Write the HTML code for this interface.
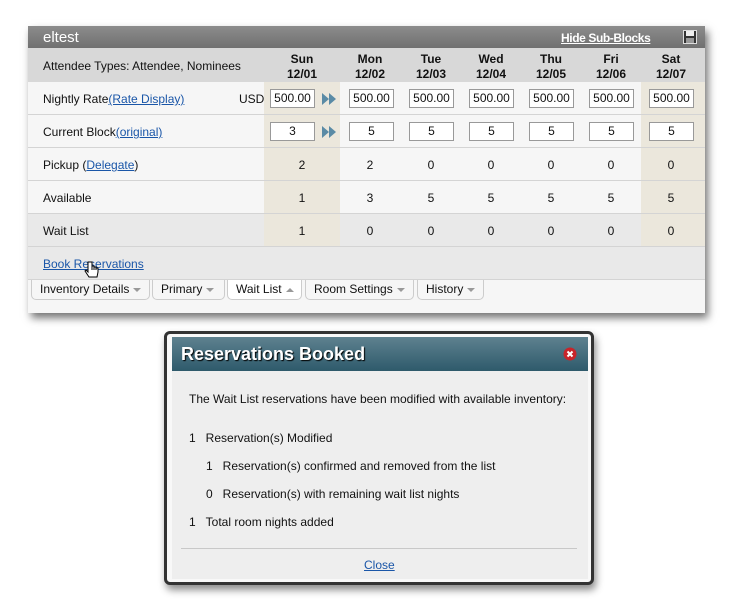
<!DOCTYPE html>
<html><head><style>
*{margin:0;padding:0;box-sizing:border-box}
body{width:730px;height:605px;background:#fff;font-family:"Liberation Sans",Arial,sans-serif;font-size:12px;color:#111;position:relative;overflow:hidden}
.a{position:absolute}
a,.lk{color:#1a56a8;text-decoration:underline}
.panel{left:28px;top:26px;width:677px;height:287px;background:#f6f6f6;box-shadow:3px 5px 8px rgba(0,0,0,.55)}
.hd{left:0;top:0;width:677px;height:22px;background:linear-gradient(#8c8c8c,#707070);color:#fff}
.row{left:0;width:677px;height:33px;border-bottom:1px solid #d4d4d4}
.c{position:absolute;text-align:center;width:60px}
.inp{position:absolute;width:45px;height:19px;border:1px solid #999;background:#fff;text-align:center;line-height:17px;font-size:12px}
.tab{position:absolute;top:254px;height:20px;border:1px solid #ccc;border-top:none;border-radius:0 0 5px 5px;background:#f6f6f6;line-height:19px;padding-left:8px;font-size:12px}
.tab i{display:inline-block;width:0;height:0;border-left:4px solid transparent;border-right:4px solid transparent;border-top:4px solid #999;vertical-align:middle;margin-left:4px}
.arr{position:absolute;width:16px;height:12px}
</style></head><body>
<div class="a panel">
 <div class="a hd"><span class="a" style="left:15px;top:3px;font-size:15px">eltest</span>
  <span class="a" style="left:533px;top:5px;font-size:12px;font-weight:bold;letter-spacing:-0.4px;text-decoration:underline">Hide Sub-Blocks</span>
  <svg class="a" style="left:655px;top:4px" width="14" height="14"><rect x="0.5" y="0.5" width="13" height="13" fill="#333" stroke="#ddd"/><rect x="3" y="1" width="8" height="5" fill="#eee"/><rect x="3" y="8" width="8" height="5" fill="#999"/></svg>
 </div>
 <div class="a" style="left:0;top:22px;width:677px;height:34px;background:#d8d8d8"></div>
 <div class="a row" style="top:56px"></div>
 <div class="a row" style="top:89px"></div>
 <div class="a row" style="top:122px"></div>
 <div class="a row" style="top:155px"></div>
 <div class="a row" style="top:188px;background:#e9e9e9"></div>
 <div class="a row" style="top:221px;background:#e9e9e9"></div>
 <div class="a" style="left:236px;top:56px;width:76px;height:165px;background:#ebe7dc"></div>
 <div class="a" style="left:613px;top:56px;width:64px;height:165px;background:#ebe7dc"></div>
 <div class="a" style="left:0;top:56px;width:677px;height:165px;background:repeating-linear-gradient(transparent 0 32px,#d4d4d4 32px 33px)"></div>
 <span class="a" style="left:15px;top:33px">Attendee Types: Attendee, Nominees</span>
 <div style="font-weight:bold;line-height:15px">
  <div class="c" style="left:244px;top:26px">Sun<br>12/01</div>
  <div class="c" style="left:312px;top:26px">Mon<br>12/02</div>
  <div class="c" style="left:373px;top:26px">Tue<br>12/03</div>
  <div class="c" style="left:433px;top:26px">Wed<br>12/04</div>
  <div class="c" style="left:493px;top:26px">Thu<br>12/05</div>
  <div class="c" style="left:553px;top:26px">Fri<br>12/06</div>
  <div class="c" style="left:613px;top:26px">Sat<br>12/07</div>
 </div>
 <span class="a" style="left:15px;top:66px">Nightly Rate<span class="lk">(Rate Display)</span></span>
 <span class="a" style="left:211px;top:66px">USD</span>
 <span class="a" style="left:15px;top:99px">Current Block<span class="lk">(original)</span></span>
 <span class="a" style="left:15px;top:132px">Pickup (<span class="lk">Delegate</span>)</span>
 <span class="a" style="left:15px;top:165px">Available</span>
 <span class="a" style="left:15px;top:198px">Wait List</span>
 <div class="inp" style="left:242px;top:63px">500.00</div>
 <div class="inp" style="left:321px;top:63px">500.00</div>
 <div class="inp" style="left:381px;top:63px">500.00</div>
 <div class="inp" style="left:441px;top:63px">500.00</div>
 <div class="inp" style="left:501px;top:63px">500.00</div>
 <div class="inp" style="left:561px;top:63px">500.00</div>
 <div class="inp" style="left:621px;top:63px">500.00</div>
 <div class="inp" style="left:242px;top:96px">3</div>
 <div class="inp" style="left:321px;top:96px">5</div>
 <div class="inp" style="left:381px;top:96px">5</div>
 <div class="inp" style="left:441px;top:96px">5</div>
 <div class="inp" style="left:501px;top:96px">5</div>
 <div class="inp" style="left:561px;top:96px">5</div>
 <div class="inp" style="left:621px;top:96px">5</div>
 <svg class="arr" style="left:293px;top:67px" viewBox="0 0 16 12"><path d="M1 0L8 6L1 12Z M8 0L15 6L8 12Z" fill="#5a8ba6"/></svg>
 <svg class="arr" style="left:293px;top:100px" viewBox="0 0 16 12"><path d="M1 0L8 6L1 12Z M8 0L15 6L8 12Z" fill="#5a8ba6"/></svg>
 <div style="line-height:14px">
  <div class="c" style="left:244px;top:132px">2</div><div class="c" style="left:312px;top:132px">2</div><div class="c" style="left:373px;top:132px">0</div><div class="c" style="left:433px;top:132px">0</div><div class="c" style="left:493px;top:132px">0</div><div class="c" style="left:553px;top:132px">0</div><div class="c" style="left:613px;top:132px">0</div>
  <div class="c" style="left:244px;top:165px">1</div><div class="c" style="left:312px;top:165px">3</div><div class="c" style="left:373px;top:165px">5</div><div class="c" style="left:433px;top:165px">5</div><div class="c" style="left:493px;top:165px">5</div><div class="c" style="left:553px;top:165px">5</div><div class="c" style="left:613px;top:165px">5</div>
  <div class="c" style="left:244px;top:198px">1</div><div class="c" style="left:312px;top:198px">0</div><div class="c" style="left:373px;top:198px">0</div><div class="c" style="left:433px;top:198px">0</div><div class="c" style="left:493px;top:198px">0</div><div class="c" style="left:553px;top:198px">0</div><div class="c" style="left:613px;top:198px">0</div>
 </div>
 <span class="a lk" style="left:15px;top:231px">Book Reservations</span>
 <div class="tab" style="left:3px;width:119px">Inventory Details<i></i></div>
 <div class="tab" style="left:124px;width:73px">Primary<i></i></div>
 <div class="tab" style="left:199px;width:75px;background:#fff">Wait List<i style="border-top:none;border-bottom:4px solid #999"></i></div>
 <div class="tab" style="left:277px;width:109px">Room Settings<i></i></div>
 <div class="tab" style="left:389px;width:67px">History<i></i></div>
 <svg class="a" style="left:56px;top:235px" width="16" height="20" viewBox="0 0 16 20"><path d="M4 1v10l-2-2-1 1 4 6h8l1-5v-4l-2 0v2-3h-2v3-4h-2v4V1z" fill="#fff" stroke="#000" stroke-width="1"/></svg>
</div>

<div class="a" style="left:164px;top:331px;width:430px;height:254px;border:3px solid #333;border-radius:6px;background:#f8f8f8;box-shadow:2px 5px 8px rgba(0,0,0,.45)">
 <div class="a" style="left:5px;top:3px;width:416px;height:34px;background:linear-gradient(#5e818f,#2e5a6b);color:#fff;font-weight:bold;font-size:18px;line-height:34px;padding-left:9px;text-shadow:1px 1px 1px #000">Reservations Booked
  <svg class="a" style="left:391px;top:10px" width="14" height="14" viewBox="0 0 14 14"><circle cx="7" cy="7" r="6.5" fill="#c8242a"/><path d="M4.5 4.5L9.5 9.5M9.5 4.5L4.5 9.5" stroke="#fff" stroke-width="2"/></svg>
 </div>
 <div class="a" style="left:5px;top:37px;width:416px;height:208px;background:#eee">
  <span class="a" style="left:17px;top:21px">The Wait List reservations have been modified with available inventory:</span>
  <span class="a" style="left:17px;top:60px">1&nbsp;&nbsp;&nbsp;Reservation(s) Modified</span>
  <span class="a" style="left:34px;top:88px">1&nbsp;&nbsp;&nbsp;Reservation(s) confirmed and removed from the list</span>
  <span class="a" style="left:34px;top:116px">0&nbsp;&nbsp;&nbsp;Reservation(s) with remaining wait list nights</span>
  <span class="a" style="left:17px;top:144px">1&nbsp;&nbsp;&nbsp;Total room nights added</span>
  <div class="a" style="left:9px;top:177px;width:396px;height:1px;background:#c8c8c8"></div>
  <span class="a lk" style="left:192px;top:187px">Close</span>
 </div>
</div>
</body></html>
